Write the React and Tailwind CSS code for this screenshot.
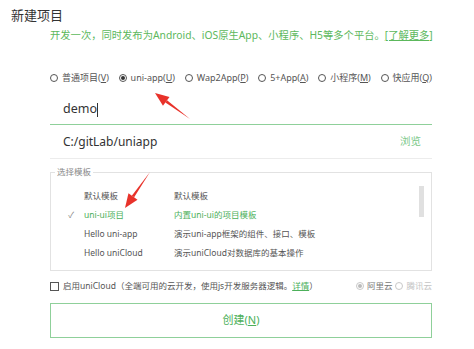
import React from 'react';

const font = { fontFamily: '"Noto Sans", "Noto Sans CJK SC", sans-serif' };

const types = [
    { label: '普通项目', key: 'V' },
    { label: 'uni-app', key: 'U', checked: true },
    { label: 'Wap2App', key: 'P' },
    { label: '5+App', key: 'A' },
    { label: '小程序', key: 'M' },
    { label: '快应用', key: 'Q' },
];

const templates = [
    { name: '默认模板', desc: '默认模板' },
    { name: 'uni-ui项目', desc: '内置uni-ui的项目模板', active: true },
    { name: 'Hello uni-app', desc: '演示uni-app框架的组件、接口、模板' },
    { name: 'Hello uniCloud', desc: '演示uniCloud对数据库的基本操作' },
];

function Radio({ checked, light }) {
    return (
        <span className={`w-[8px] h-[8px] rounded-full border flex items-center justify-center shrink-0 ${light ? 'border-[#c8c8c8]' : 'border-[#555]'}`}>
            {checked && <span className={`w-[4px] h-[4px] rounded-full ${light ? 'bg-[#bbb]' : 'bg-[#333]'}`} />}
        </span>
    );
}

function Arrow({ x1, y1, x2, y2 }) {
    // arrow from (x1,y1) to tip (x2,y2)
    const a = Math.atan2(y2 - y1, x2 - x1);
    const len = 14, w = 5.5;
    const bx = x2 - len * Math.cos(a), by = y2 - len * Math.sin(a);
    const px = -Math.sin(a) * w, py = Math.cos(a) * w;
    const sx = -Math.sin(a) * 1.4, sy = Math.cos(a) * 1.4;
    return (
        <g fill="#e8322a">
            <polygon points={`${x1},${y1} ${bx + sx},${by + sy} ${bx - sx},${by - sy}`} />
            <polygon points={`${x2},${y2} ${bx + px},${by + py} ${bx - px},${by - py}`} />
        </g>
    );
}

export default function App() {
    return (
        <div className="w-[474px] h-[349px] bg-white relative overflow-hidden text-[#444]" style={font}>
            <h1 className="pt-[6px] pl-[11px] text-[13px] leading-[18px] text-[#333]">新建项目</h1>

            <div className="pl-[50px] pr-[42px]">
                <p className="mt-[4px] text-[10.3px] leading-[14px] text-[#5cb85c] whitespace-nowrap">
                    开发一次，同时发布为Android、iOS原生App、小程序、H5等多个平台。<span className="underline">[了解更多]</span>
                </p>

                {/* project type */}
                <div className="mt-[29px] flex justify-between items-center text-[9px] leading-[14px] text-[#555] whitespace-nowrap">
                    {types.map(t => (
                        <label key={t.key} className="flex items-center gap-[4px]">
                            <Radio checked={t.checked} />
                            <span>{t.label}(<span className="underline">{t.key}</span>)</span>
                        </label>
                    ))}
                </div>

                {/* name */}
                <div className="h-[40px] border-b border-[#8fd09a] flex items-center pl-[13px] pt-[10px]">
                    <span className="text-[12.5px] text-[#333]">demo</span>
                    <span className="w-px h-[14px] bg-[#333]" />
                </div>

                {/* location */}
                <div className="h-[34px] border-b border-[#ececec] flex items-center justify-between pl-[13px] pr-[11px]">
                    <span className="text-[12px] text-[#333]">C:/gitLab/uniapp</span>
                    <span className="text-[10.5px] text-[#7cc98a]">浏览</span>
                </div>

                {/* templates */}
                <fieldset className="mt-[7px] h-[105px] border border-[#e2e2e2] px-0 pt-[8px] relative">
                    <legend className="ml-[4px] px-[2px] text-[8.5px] leading-[12px] text-[#888]">选择模板</legend>
                    <div className="text-[8.5px] leading-[19px] text-[#555]">
                        {templates.map(t => (
                            <div key={t.name} className={`flex items-center ${t.active ? 'text-[#4cb05a]' : ''}`}>
                                <span className="w-[33px] text-right pr-[10px] text-[#888]">{t.active ? '✓' : ''}</span>
                                <span className="w-[90px]">{t.name}</span>
                                <span>{t.desc}</span>
                            </div>
                        ))}
                    </div>
                    <div className="absolute right-[7px] top-[8px] w-[5px] h-[31px] bg-[#e0e0e0]" />
                </fieldset>

                {/* uniCloud */}
                <div className="mt-[8px] flex items-center justify-between text-[8.5px] leading-[14px] whitespace-nowrap">
                    <label className="flex items-center gap-[4px] text-[#555]">
                        <span className="w-[9px] h-[9px] border border-[#555]" />
                        <span>启用uniCloud（全端可用的云开发，使用js开发服务器逻辑。<span className="text-[#4cb05a] underline">详情</span>）</span>
                    </label>
                    <div className="flex items-center gap-[3px] text-[#aaa]">
                        <Radio checked light />
                        <span className="text-[#777]">阿里云</span>
                        <Radio light />
                        <span className="text-[#c4c4c4]">腾讯云</span>
                    </div>
                </div>

                <button className="mt-[10px] w-full h-[35px] border border-[#8fd09a] text-[11px] text-[#4cb05a]">
                    创建(<span className="underline">N</span>)
                </button>
            </div>

            <svg className="absolute inset-0 pointer-events-none" width="474" height="349">
                <Arrow x1={190} y1={119} x2={155} y2={93} />
                <Arrow x1={150} y1={172} x2={125} y2={208} />
            </svg>
        </div>
    );
}
